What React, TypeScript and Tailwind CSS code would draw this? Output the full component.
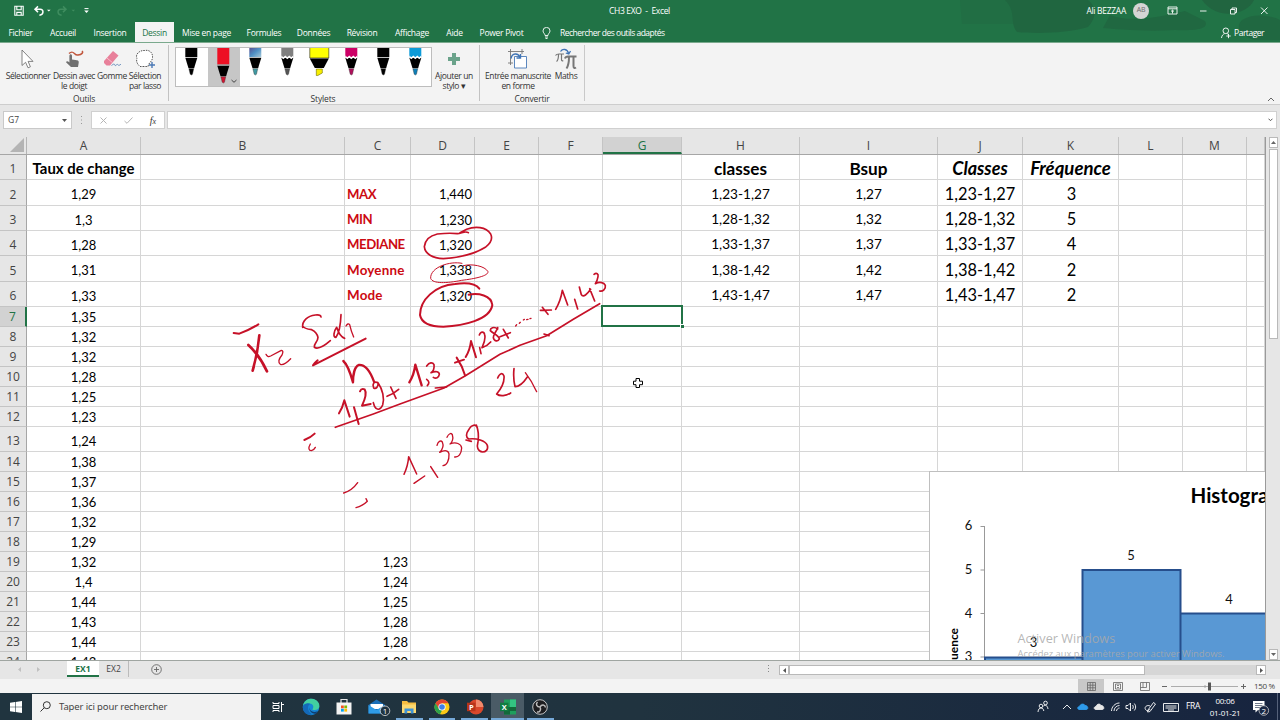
import type { ReactNode } from 'react';
import clsx from 'clsx';

const COLS = ['A', 'B', 'C', 'D', 'E', 'F', 'G', 'H', 'I', 'J', 'K', 'L', 'M', ''];

const GRID =
  'grid grid-cols-[27px_114px_204px_66px_64px_64px_64px_79px_118px_138px_85px_96px_64px_64px_18px]';

type Row = { n: number; h: string; cells: Record<string, string> };

const TALL = 'h-[25px]';
const TALLER = 'h-[26px]';
const STD = 'h-5';

const ROWS: Row[] = [
  { n: 1, h: TALL, cells: { A: 'Taux de change', H: 'classes', I: 'Bsup', J: 'Classes', K: 'Fréquence' } },
  { n: 2, h: TALLER, cells: { A: '1,29', C: 'MAX', D: '1,440', H: '1,23-1,27', I: '1,27', J: '1,23-1,27', K: '3' } },
  { n: 3, h: TALL, cells: { A: '1,3', C: 'MIN', D: '1,230', H: '1,28-1,32', I: '1,32', J: '1,28-1,32', K: '5' } },
  { n: 4, h: TALL, cells: { A: '1,28', C: 'MEDIANE', D: '1,320', H: '1,33-1,37', I: '1,37', J: '1,33-1,37', K: '4' } },
  { n: 5, h: TALLER, cells: { A: '1,31', C: 'Moyenne', D: '1,338', H: '1,38-1,42', I: '1,42', J: '1,38-1,42', K: '2' } },
  { n: 6, h: TALL, cells: { A: '1,33', C: 'Mode', D: '1,320', H: '1,43-1,47', I: '1,47', J: '1,43-1,47', K: '2' } },
  { n: 7, h: STD, cells: { A: '1,35' } },
  { n: 8, h: STD, cells: { A: '1,32' } },
  { n: 9, h: STD, cells: { A: '1,32' } },
  { n: 10, h: STD, cells: { A: '1,28' } },
  { n: 11, h: STD, cells: { A: '1,25' } },
  { n: 12, h: STD, cells: { A: '1,23' } },
  { n: 13, h: TALL, cells: { A: '1,24' } },
  { n: 14, h: STD, cells: { A: '1,38' } },
  { n: 15, h: STD, cells: { A: '1,37' } },
  { n: 16, h: STD, cells: { A: '1,36' } },
  { n: 17, h: STD, cells: { A: '1,32' } },
  { n: 18, h: STD, cells: { A: '1,29' } },
  { n: 19, h: STD, cells: { A: '1,32', C: '1,23' } },
  { n: 20, h: STD, cells: { A: '1,4', C: '1,24' } },
  { n: 21, h: STD, cells: { A: '1,44', C: '1,25' } },
  { n: 22, h: STD, cells: { A: '1,43', C: '1,28' } },
  { n: 23, h: STD, cells: { A: '1,44', C: '1,28' } },
  { n: 24, h: STD, cells: { A: '1,43', C: '1,29' } },
];

function cellStyle(col: string, row: number) {
  if (row === 1) {
    if (col === 'A') return 'justify-center pt-[3px] font-bold text-[14.9px] text-black';
    if (col === 'J') return 'justify-center pt-0.5 font-bold italic text-[18px] text-black';
    if (col === 'K') return 'justify-center pt-0.5 font-bold italic text-[18.6px] text-black';
    return 'justify-center pt-[3px] font-bold text-[17.2px] text-black';
  }
  if (col === 'C' && row < 5) return 'justify-start pl-0.5 font-bold text-[13.2px] tracking-[-0.45px] text-[#cc0a12]';
  if (col === 'C' && row < 7) return 'justify-start pl-0.5 font-bold text-[13.4px] tracking-[0.2px] text-[#cc0a12]';
  if (col === 'C' || col === 'D') return 'justify-end pr-0.5 text-[13px] text-black';
  if (col === 'H' || col === 'I') return 'justify-center text-[13.6px] text-black';
  if (col === 'J') return 'justify-center pt-[3px] text-[16.4px] text-black';
  if (col === 'K') return 'justify-center pl-0.5 pt-[3px] text-[16.4px] text-black';
  return 'justify-center text-[13px] text-black';
}

function cellPad(col: string, row: Row) {
  if (row.n === 1 || col === 'J' || col === 'K') return '';
  return row.h === STD ? 'pt-0.5' : 'pt-1';
}

function TitleBar() {
  return (
    <div className="relative flex h-[21px] items-center text-[8.5px] tracking-[-0.3px] text-white">
      {/* Office background pattern */}
      <svg className="absolute right-0 top-0" width="330" height="43" viewBox="0 0 330 43">
        <path d="M10 0h55v24H12z" fill="#216e44" />
        <path d="M55 0h83c12 10 5 22 0 27-20 6-50 7-71 5-8-10 0-20-12-32z" fill="#206640" />
        <path d="M160 15c20 8 50 2 75-4l20 10c5 8-10 10-30 9-30 2-60-1-72-2z" fill="#206841" />
        <path d="M252 0h52c-6 14-36 22-52 0z" fill="#216540" />
        <path d="M292 20c12-8 30-4 38 0v20h-26c-12-4-20-12-12-20z" fill="#206841" />
      </svg>
      <svg className="relative ml-[14px]" width="76" height="12" viewBox="0 0 76 12" fill="none" stroke="#fff">
        <path d="M.8 1.3h8.400v9H.8zM2.800 1.300v3.400h4.400V1.300M2.800 10.300V7.400h4.400v2.900" strokeWidth="1.100" />
        <path d="M21 4.200h5.200c3.600 0 4 5.400-.8 6M24 1.400 21 4.300l3 2.800" strokeWidth="1.500" />
        <path d="m33 4.800 1.800 1.600 1.800-1.600z" fill="#fff" stroke="none" />
        <path d="M52 4.200h-5.200c-3.600 0-4 5.400.8 6M49 1.400l3 2.900-3 2.800" stroke="#3f8d5f" strokeWidth="1.500" />
        <path d="m57.500 4.800 1.800 1.600 1.800-1.600z" fill="#3f8d5f" stroke="none" />
        <path d="M70.500 3.600h4" />
        <path d="m70.200 5.600 2.300 2.300 2.300-2.300z" fill="#fff" stroke="none" />
      </svg>
      <span className="absolute left-[609px] whitespace-pre pt-px tracking-[-0.34px]">CH3 EXO  -  Excel</span>
      <div className="relative ml-auto flex items-center">
        <span className="pt-px">Ali BEZZAA</span>
        <span className="ml-[7px] flex size-4 items-center justify-center rounded-full bg-[#d5d5d5] text-[7px] text-[#6d6d6d]">
          AB
        </span>
        <svg className="ml-[17px] mr-[8px]" width="106" height="12" viewBox="0 0 106 12" fill="none" stroke="#fff" strokeWidth=".9">
          <path d="M2 2h9v7H2zM2 3.800h9M6.500 8.500V5.300M5 6.500l1.500-1.400L8 6.500" />
          <path d="M34 6h6.500" />
          <path d="M64.500 4.500H69V9h-4.500zM66 4.500V3h4.500v4.500H69" />
          <path d="m95 2.500 6.500 6.500m0-6.500L95 9" />
        </svg>
      </div>
    </div>
  );
}

const TABS = [
  { label: 'Fichier', w: 'w-[41px]' },
  { label: 'Accueil', w: 'w-[44px]' },
  { label: 'Insertion', w: 'w-[50px]' },
  { label: 'Dessin', w: 'w-[39px]', active: true },
  { label: 'Mise en page', w: 'w-[65px]' },
  { label: 'Formules', w: 'w-[50px]' },
  { label: 'Données', w: 'w-[49px]' },
  { label: 'Révision', w: 'w-[48px]' },
  { label: 'Affichage', w: 'w-[52px]' },
  { label: 'Aide', w: 'w-[33px]' },
  { label: 'Power Pivot', w: 'w-[61px]' },
];

function RibbonTabs() {
  return (
    <div className="relative flex h-[21px] text-[8.5px] tracking-[-0.28px] text-white">
      {TABS.map((t) => (
        <div
          key={t.label}
          className={clsx(
            'mt-px flex items-center justify-center whitespace-nowrap pt-0.5',
            t.w,
            t.active && 'bg-[#f3f3f3] text-[#217346]',
          )}
        >
          {t.label}
        </div>
      ))}
      <div className="ml-[10px] flex items-center gap-[9px] pt-[3px]">
        <svg width="9" height="12" viewBox="0 0 9 12" fill="none" stroke="#fff" strokeWidth=".9">
          <path d="M3 8.500C3 6.500 1 6 1 3.900a3.500 3.500 0 0 1 7 0c0 2.100-2 2.600-2 4.600zM3 10h3M3.500 11.500h2" />
        </svg>
        <span className="tracking-[-0.5px]">Rechercher des outils adaptés</span>
      </div>
      <div className="ml-auto mr-4 flex items-center gap-[3px] pt-[3px]">
        <svg width="10" height="12" viewBox="0 0 10 12" fill="none" stroke="#fff" strokeWidth=".9">
          <circle cx="4.800" cy="3.800" r="2.800" />
          <path d="M.5 11c.3-2.500 1.500-3.700 3-4.300M6.500 6.500l1 1.500M7.500 6.800v4.400M5.300 9h4.400" />
        </svg>
        <span className="tracking-[-0.5px]">Partager</span>
      </div>
    </div>
  );
}

function Tool({ icon, lines, className }: { icon: ReactNode; lines: string[]; className: string }) {
  return (
    <div className={clsx('flex flex-col items-center', className)}>
      <div className="flex h-[23.5px] items-center">{icon}</div>
      {lines.map((l) => (
        <span key={l} className="h-[10.5px] whitespace-nowrap leading-[10.5px]">
          {l}
        </span>
      ))}
    </div>
  );
}

type PenProps = { body: string; tip: string; kind?: 'pen' | 'pencil' | 'marker'; selected?: boolean };

function Pen({ body, tip, kind = 'pen', selected }: PenProps) {
  return (
    <div className={clsx('relative h-full w-8', selected && 'bg-[#c6c6c6]')}>
      <svg width="32" height="38" viewBox="0 0 32 38">
        <defs>
          <linearGradient id="galaxy" x1="0" x2="1" y1="0" y2="1">
            <stop offset="0" stopColor="#5b4a8c" />
            <stop offset=".5" stopColor="#4e8fc4" />
            <stop offset="1" stopColor="#a6c9d8" />
          </linearGradient>
        </defs>
        {kind === 'marker' ? (
          <g transform="translate(-.7 -.5)">
            <path d="M6.500 0h19v10.500h-19z" fill={body} stroke="#222" strokeWidth=".6" />
            <path d="M6.500 11h19l-5 9.500h-9z" fill="#000" />
            <path d="M13 21.500h6v4L14.500 28H13z" fill={tip} stroke="#6b6b00" strokeWidth=".6" />
          </g>
        ) : (
          <g transform={selected ? 'translate(-.7 7)' : 'translate(-.7 -1)'}>
            <path d={selected ? 'M10-8h12V9.500H10z' : 'M10 0h12v10H10z'} fill={body} />
            <path d="M10 10.800h12l-3.200 10.400h-5.600z" fill="#000" />
            {kind === 'pencil' && (
              <path d="m10 8.500 2 1.800 2-1.800 2 1.800 2-1.800 2 1.800 2-1.800v2l-2 1.700-2-1.700-2 1.700-2-1.700-2 1.700-2-1.700z" fill="#fff" />
            )}
            {selected && <path d="M10 9.500h12v1.300H10z" fill="#8f8f8f" />}
            <path d="M13.600 21.800h4.800l-1.200 5.400-1 .8-1.300-.8z" fill={tip} stroke="#333" strokeWidth=".4" />
          </g>
        )}
        {selected && <path d="m23.500 32 2.500 2.300 2.500-2.300" fill="none" stroke="#444" />}
      </svg>
    </div>
  );
}

const PENS: PenProps[] = [
  { body: '#000', tip: '#000' },
  { body: '#ed1024', tip: '#d21430', selected: true },
  { body: 'url(#galaxy)', tip: '#3f9aa3' },
  { body: '#7f7f7f', tip: '#555', kind: 'pencil' },
  { body: '#ffff00', tip: '#f7ee00', kind: 'marker' },
  { body: '#cc0066', tip: '#b0105c', kind: 'pencil' },
  { body: '#000', tip: '#000' },
  { body: '#0d9bd8', tip: '#0d7fb8', kind: 'pencil' },
];

function Ribbon() {
  return (
    <div className="relative flex h-[62px] border-b border-[#cdcdcd] bg-[#f3f3f3] text-[8.5px] tracking-[-0.4px] text-[#333]">
      <div className="flex h-full w-[168px] flex-col pt-1">
        <div className="flex h-[45.5px]">
          <Tool
            className="w-[56px]"
            lines={['Sélectionner']}
            icon={
              <svg width="14" height="20" viewBox="0 0 14 20" fill="#fff" stroke="#666" strokeWidth=".8">
                <path d="M1 1v15.500l3.600-3.200 2.400 5.500 2.400-1-2.300-5.400H12z" />
              </svg>
            }
          />
          <Tool
            className="w-[36px]"
            lines={['Dessin avec', 'le doigt']}
            icon={
              <svg width="19" height="18" viewBox="0 0 19 18" fill="none">
                <path d="M4 3.500C9-1 9 6 13 5c4-.5 5.500-2.500 4-4" stroke="#c0563c" strokeWidth="1.500" />
                <path d="M5 4.500c1.500-.5 2 .5 2 1.500v3.500l5 .8c1.500.3 2 1.200 1.700 2.500L13 17H6L1 12.200c.5-1.400 2-1 3.400.3V5.500z" fill="#707070" />
              </svg>
            }
          />
          <Tool
            className="w-[40px]"
            lines={['Gomme']}
            icon={
              <svg width="20" height="18" viewBox="0 0 20 18">
                <path d="m2 11 9-10 5.500 4.500-8.500 10H4.500L2 13z" fill="#e8809a" />
                <path d="m5 8 5.500 4.700" stroke="#f7bfcb" />
                <path d="M9.500 15.500c2-1.500 3-2 3.200-.5 1 2 2-2 3.500 0 .8.800 1.500 0 2.800-.8" fill="none" stroke="#5b83b5" strokeWidth=".9" />
              </svg>
            }
          />
          <Tool
            className="w-[26px]"
            lines={['Sélection', 'par lasso']}
            icon={
              <svg width="20" height="20" viewBox="0 0 20 20" fill="none">
                <path d="M9 17.500H5C0 13 2 10 2 9c-2-3 2-8 8-7.500 4-1 8 2 7.500 7 0 4-4 5-4.500 9z" fill="#fff" stroke="#444" strokeDasharray="1.500 1" strokeWidth=".9" />
                <path d="M17 13v6M14 16h6" stroke="#4a78b5" strokeWidth="1.400" />
              </svg>
            }
          />
        </div>
        <span className="text-center leading-[13px] tracking-[-0.2px]">Outils</span>
      </div>
      <div className="mt-0.5 h-14 w-px bg-[#c2c2c2]" />

      <div className="flex w-[262px] flex-col items-center pl-1.5 pt-1">
        <div className="flex h-10 w-[257px] border border-[#bdbdbd] bg-white">
          {PENS.map((p, i) => (
            <Pen key={i} {...p} />
          ))}
        </div>
        <span className="mt-[5px] w-[257px] pr-1 pl-11 text-center leading-[13px] tracking-[-0.15px]">Stylets</span>
      </div>
      <Tool
        className="w-[46px] pt-1"
        lines={['Ajouter un', 'stylo ▾']}
        icon={
          <svg width="12" height="12" viewBox="0 0 12 12">
            <path d="M4 0h4v4h4v4H8v4H4V8H0V4h4z" fill="#6ba38b" />
          </svg>
        }
      />
      <div className="ml-0.5 mt-0.5 h-14 w-px bg-[#c2c2c2]" />

      <div className="flex w-[104px] flex-col pt-1">
        <div className="flex h-[45.5px]">
          <Tool
            className="w-[76px]"
            lines={['Entrée manuscrite', 'en forme']}
            icon={
              <svg width="20" height="20" viewBox="0 0 20 20" fill="none">
                <path d="M2.500 0v16M0 2.500h16M14 0v5M0 14h5" stroke="#777" strokeWidth=".9" />
                <path d="M6.500 7.500h12v11.500h-12z" fill="#fff" stroke="#4a7ab8" strokeWidth=".9" />
                <path d="M3 9.500C4 4 10 3.500 12 8.500M12.500 5v4H8.500" stroke="#3f74b5" strokeWidth="1.400" />
              </svg>
            }
          />
          <Tool
            className="w-5"
            lines={['Maths']}
            icon={
              <svg width="22" height="22" viewBox="0 0 22 22" fill="none" stroke="#777">
                <path d="M.5 7.500C1.500 6 2 6 4 6h5M3.500 6.500c0 4-.5 6-2 7M6.500 6.500v5c0 1.500.8 1.700 1.700 1" strokeWidth="1.200" />
                <path d="M10 10.500c.5-1.700 1-2 3-2h8.500M14 9c0 6-.8 9-2.500 11.500M18.500 9v9c0 2 1 2.500 2.500 1.500" strokeWidth="2" />
                <path d="M5.500 3.500c2-3 7-3 8 2M15.500 3l-1.700 3-3-1" stroke="#3f74b5" strokeWidth="1.300" />
              </svg>
            }
          />
        </div>
        <span className="text-center leading-[13px] tracking-[-0.2px]">Convertir</span>
      </div>
      <div className="mt-0.5 h-14 w-px bg-[#c9c9c9]" />
      <svg className="ml-auto mr-[5px] mt-[54px]" width="8" height="5" viewBox="0 0 8 5" fill="none" stroke="#666">
        <path d="m1 4 3-3 3 3" />
      </svg>
    </div>
  );
}

function FormulaBar() {
  return (
    <div className="flex h-8 items-start bg-[#e6e6e6] pl-[3px] pt-1.5">
      <div className="flex h-[18px] w-[69px] items-center justify-between border border-[#c9c9c9] bg-white px-1 text-[8.5px] text-[#444]">
        G7
        <svg width="5" height="3" viewBox="0 0 5 3">
          <path d="M0 0h5L2.500 3z" fill="#555" />
        </svg>
      </div>
      <svg className="mx-2 mt-1" width="3" height="10" viewBox="0 0 3 10" fill="#999">
        <path d="M1 1h1v1H1zM1 4.500h1v1H1zM1 8h1v1H1z" />
      </svg>
      <div className="flex h-[18px] w-[74px] items-center justify-between border border-[#d0d0d0] bg-white pl-2 pr-2">
        <svg width="7" height="7" viewBox="0 0 7 7" stroke="#b5b5b5">
          <path d="m.5.5 6 6m0-6-6 6" />
        </svg>
        <svg width="9" height="7" viewBox="0 0 9 7" stroke="#b5b5b5" fill="none">
          <path d="m.5 4 2.500 2.300L8.500.5" />
        </svg>
        <span className="font-['Liberation_Serif'] text-[10px] italic text-[#333]">
          f<span className="text-[8px]">x</span>
        </span>
      </div>
      <div className="ml-0.5 flex h-[18px] w-[1110px] items-center justify-end border border-[#d0d0d0] bg-white pr-[3px]">
        <svg width="5" height="4" viewBox="0 0 5 4" fill="none" stroke="#555">
          <path d="m.5.700 2 2 2-2" />
        </svg>
      </div>
    </div>
  );
}

function Sheet() {
  return (
    <div className="relative h-[523px] w-[1266px] overflow-hidden border-r border-[#9a9a9a] bg-white">
      <div className={clsx(GRID, 'h-[18px] border-b border-[#a6a6a6] bg-[#e6e6e6]')}>
        <div className="flex items-end justify-end border-r border-[#b5b5b5] pb-0.5 pr-0.5">
          <svg width="14" height="14" viewBox="0 0 14 14">
            <path d="M14 0v14H0z" fill="#b4b4b4" />
          </svg>
        </div>
        {COLS.map((c, i) => (
          <div
            key={i}
            className={clsx(
              'flex items-start justify-center border-r border-[#c4c4c4] pt-[3px] text-[12px] leading-none',
              c === 'G' ? 'border-b-2 border-b-[#217346] bg-[#d2d2d2] text-[#217346]' : 'text-[#444]',
            )}
          >
            {c}
          </div>
        ))}
      </div>
      {ROWS.map((r) => (
        <div key={r.n} className={clsx(GRID, r.h)}>
          <div
            className={clsx(
              'flex items-center justify-center border-b border-r text-[12px] leading-none',
              r.h !== STD && 'pt-1',
              r.n === 7
                ? 'border-b-[#c4c4c4] border-r-2 border-r-[#217346] bg-[#d2d2d2] text-[#217346]'
                : 'border-b-[#c4c4c4] border-r-[#a6a6a6] bg-[#e6e6e6] text-[#444]',
            )}
          >
            {r.n}
          </div>
          {COLS.map((c, i) => (
            <div
              key={i}
              className={clsx(
                "flex items-center whitespace-nowrap border-b border-r border-[#d6d6d6] font-['Lato'] leading-none",
                cellStyle(c, r.n),
                cellPad(c, r),
              )}
            >
              {r.cells[c]}
            </div>
          ))}
        </div>
      ))}
      {/* active cell */}
      <div className="absolute left-[601px] top-[168px] h-[22px] w-[82px] border-2 border-[#217346]">
        <div className="absolute -bottom-[3px] -right-[3px] size-1 border-l border-t border-white bg-[#217346]" />
      </div>
      <Chart />
      <Ink />
      <svg className="absolute left-[632px] top-[240px]" width="12" height="12" viewBox="0 0 12 12">
        <path d="M4 1.500h3.500v2.700h3v3.500h-3v2.800H4V7.700H1.500V4.200H4z" fill="#fff" stroke="#000" />
      </svg>
    </div>
  );
}

function Chart() {
  return (
    <div className="absolute left-[929px] top-[334px] h-[200px] w-[345px] border-l border-t border-[#bfbfbf] bg-white font-['Lato']">
      <svg width="344" height="200" viewBox="930 472 344 200" className="text-[13px]">
        <text x="1190.500" y="503" fontSize="20.500" fontWeight="700">Histogramme</text>
        <path d="M984.500 526v140M980.500 526.500h4M980.500 570h4M980.500 613.500h4M980.500 657h4" stroke="#999" fill="none" />
        <g fill="#5998d4" stroke="#264e8c" strokeWidth="2">
          <path d="M985 657.500h98v30h-98z" />
          <path d="M1180 613.500h100v80h-100z" />
          <path d="M1082.500 570h98v110h-98z" />
        </g>
        <g textAnchor="middle" fill="#111">
          <text x="968.500" y="530">6</text>
          <text x="968.500" y="574">5</text>
          <text x="968.500" y="618">4</text>
          <text x="968.500" y="661">3</text>
          <text x="1131" y="560">5</text>
          <text x="1229" y="604">4</text>
          <text x="1033.500" y="647">3</text>
        </g>
        <text transform="translate(958 628) rotate(-90)" textAnchor="end" fontSize="12" fontWeight="700">Fréquence</text>
      </svg>
    </div>
  );
}

// Handwritten mean calculation, drawn at three times the sheet scale
function Ink() {
  return (
    <svg
      className="pointer-events-none absolute left-0 top-0"
      width="1265"
      height="523"
      viewBox="0 137 1265 523"
      fill="none"
      stroke="#c61128"
      strokeLinecap="round"
      strokeLinejoin="round"
    >
      <g transform="translate(220 220) scale(.33333)" strokeWidth="5">
        <path d="M41 339 58 341Q88 330 115 313" strokeWidth="6" />
        <path d="M118 346Q113 400 98 452M85 375Q118 405 141 454" strokeWidth="8" />
        <path d="M138 403Q142 413 152 408L184 391Q192 392 186 405C175 418 174 428 181 433Q192 437 212 416" strokeWidth="4" />
        <path d="M303 291Q302 283 286 285C262 288 246 302 248 322M248 318Q252 326 275 329C285 334 292 342 294 352C294 366 280 372 283 382C296 390 315 376 331 362" />
        <path d="M363 284C362 310 358 338 348 352Q341 352 342 342Q344 330 350 322C355 338 364 352 374 355" />
        <path d="M378 318Q384 308 389 314C392 328 396 340 401 351" strokeWidth="4" />
        <path d="M437 356 279 436Q284 428 293 421" strokeWidth="6" />
        <path d="M370 423C384 435 392 462 399 487C399 465 404 440 416 435C436 433 452 458 462 485" strokeWidth="7" />
        <path d="M357 580Q368 563 373 541L389 590M402 562 416 612" strokeWidth="6" />
        <path d="M420 514Q424 504 434 508C442 520 434 540 426 557L452 552" strokeWidth="6" />
        <path d="M474 488C462 482 456 492 461 504C468 508 476 500 474 488C488 508 494 535 488 555C482 570 470 572 464 560L460 548" />
        <path d="M501 529Q520 522 536 508M512 501 528 535" />
        <path d="M346 622 460 582 540 552 672 504 735 468 840 403 900 376 980 347 1060 298 1139 251" />
        <path d="M646 504 680 501M972 342 987 347" />
        <path d="M253 660Q272 653 284 641" strokeWidth="6" />
        <path d="M271 672C264 684 266 692 274 692Q282 690 286 682M371 819Q396 812 413 788M408 863Q428 858 442 844L438 836" strokeWidth="4" />
      </g>
      <g transform="translate(400 220) scale(.33333)" strokeWidth="5">
        <path d="M205 38C196 32 185 40 172 41C150 38 130 40 112 42C85 48 75 62 73 80C75 102 98 115 130 116C190 112 235 95 256 82C275 68 278 55 272 42C258 20 225 18 200 28L180 38" />
        <path d="M186 130C150 122 90 142 92 175C98 192 140 190 185 181C225 176 265 168 264 155C255 138 215 130 190 137" strokeWidth="3" />
        <path d="M238 206C225 188 195 188 165 192C105 196 60 240 60 285C65 312 95 320 130 320C190 317 270 300 277 255C274 225 235 219 206 224" strokeWidth="6" />
        <path d="M28 487Q42 465 46 434L65 496" strokeWidth="7" />
        <path d="M80 478Q92 486 82 497M80 438C88 426 98 426 102 434C104 446 99 456 93 458C108 452 118 455 118 463C116 474 108 477 100 472" />
        <path d="M165 428 192 419M170 413Q187 438 195 466" strokeWidth="6" />
        <path d="M197 411Q210 390 213 363L228 412" strokeWidth="6" />
        <path d="M239 383 243 401M238 345C242 334 252 334 254 344C258 358 250 374 246 383Q262 378 272 366M293 327C282 318 270 324 271 332C280 342 296 344 298 357C294 366 282 364 280 353C280 342 290 334 293 323M300 350 331 338M310 328 325 354" />
        <path d="M347 318 350 314M358 310 361 307M370 300 373 298M380 299 384 298M390 296 393 295" strokeWidth="4" />
        <path d="M421 271 454 270M427 262 444 283" />
        <path d="M467 268Q482 242 487 211L503 255M524 238 533 267" />
        <path d="M538 201 544 224C550 234 562 222 572 208M569 206 584 243" />
        <path d="M582 163C590 157 596 162 594 170C592 182 590 186 586 191C600 184 612 188 616 196C618 206 608 216 599 213" />
        <path d="M293 474C300 458 308 458 312 468C314 490 302 508 290 522C300 530 318 528 332 519M342 446Q339 475 345 500C360 500 372 486 382 471" />
        <path d="M376 458Q396 484 410 515" strokeWidth="4" />
        <path d="M12 763Q24 738 26 710L50 762M42 790 74 768M92 740 113 772" strokeWidth="4.500" />
        <path d="M111 676C114 664 122 660 127 666C132 678 126 690 119 697C136 688 146 692 147 702C148 722 140 736 129 737M141 652C146 640 154 638 157 644C161 656 156 668 150 672C168 664 184 672 185 684C184 702 176 712 164 711" strokeWidth="4" />
        <path d="M232 623C228 610 214 616 208 626C196 642 198 652 206 657C230 654 256 662 262 676C266 690 256 696 248 696C232 694 230 680 234 665C238 640 234 628 229 615" />
        <path d="M198 660 214 664" />
      </g>
    </svg>
  );
}

function VerticalScrollbar() {
  return (
    <div className="flex w-3.5 flex-col items-center bg-[#e6e6e6]">
      <div className="flex h-[11px] w-[9px] items-center justify-center border border-[#b9b9b9] bg-white">
        <svg width="5" height="3" viewBox="0 0 5 3">
          <path d="M0 3h5L2.500 0z" fill="#666" />
        </svg>
      </div>
      <div className="mt-px h-[190px] w-[9px] border border-[#b9b9b9] bg-white" />
      <div className="mt-auto flex h-[11px] w-[9px] items-center justify-center border border-[#b9b9b9] bg-white">
        <svg width="5" height="3" viewBox="0 0 5 3">
          <path d="M0 0h5L2.500 3z" fill="#666" />
        </svg>
      </div>
    </div>
  );
}

function SheetTabs() {
  return (
    <div className="flex h-[19px] border-t border-[#9fa5a1] bg-[#e6e6e6] text-[8.5px] text-[#444]">
      <svg className="ml-[17px] mt-[5px]" width="24" height="7" viewBox="0 0 24 7" fill="#c0c0c0">
        <path d="M4 1v5L1 3.500zM20 1v5l3-2.500z" />
      </svg>
      <div className="ml-[26px] flex h-4 w-8 items-center justify-center border-b-2 border-[#217346] bg-white pt-0.5 font-bold text-[#217346]">
        EX1
      </div>
      <div className="flex h-4 w-[30px] items-center justify-center border-r border-[#bbb]">EX2</div>
      <svg className="ml-[22px] mt-[3px]" width="11" height="11" viewBox="0 0 11 11" fill="none" stroke="#666" strokeWidth=".9">
        <circle cx="5.500" cy="5.500" r="4.800" />
        <path d="M5.500 3v5M3 5.500h5" />
      </svg>
      <svg className="ml-auto mt-1" width="3" height="9" viewBox="0 0 3 9" fill="#888">
        <path d="M1 0h1v1H1zM1 3h1v1H1zM1 6h1v1H1z" />
      </svg>
      <div className="ml-[9px] mr-[14px] mt-1 flex h-[10px] w-[487px] items-stretch bg-[#d6d6d6]">
        <div className="flex w-[10px] items-center justify-center border border-[#b9b9b9] bg-white">
          <svg width="3" height="5" viewBox="0 0 3 5"><path d="M3 0v5L0 2.500z" fill="#555" /></svg>
        </div>
        <div className="w-[356px] border border-[#b9b9b9] bg-white" />
        <div className="ml-auto flex w-[10px] items-center justify-center border border-[#b9b9b9] bg-white">
          <svg width="3" height="5" viewBox="0 0 3 5"><path d="M0 0v5l3-2.500z" fill="#555" /></svg>
        </div>
      </div>
    </div>
  );
}

function StatusBar() {
  return (
    <div className="flex h-[14px] items-center justify-end bg-[#f3f3f3] pr-[5px] text-[8px] text-[#444]">
      <div className="flex h-full w-[26px] items-center justify-center bg-[#c8c8c8]">
        <svg width="9" height="9" viewBox="0 0 9 9" fill="none" stroke="#666" strokeWidth=".8">
          <path d="M.5.500h8v8h-8zM3.200.500v8M5.800.500v8M.5 3.200h8M.5 5.800h8" />
        </svg>
      </div>
      <svg className="ml-[9px]" width="10" height="9" viewBox="0 0 10 9" fill="none" stroke="#666" strokeWidth=".8">
        <path d="M.5.500h9v8h-9zM2.500 2v5h5V2zM4 3.500h2M4 5.500h2" />
      </svg>
      <svg className="ml-[17px]" width="10" height="9" viewBox="0 0 10 9" fill="none" stroke="#666" strokeWidth=".8">
        <path d="M.5.500h9v8h-9zM3 .5v5h3.500v-5M.5 5.500H3" />
      </svg>
      <svg className="ml-3" width="84" height="9" viewBox="0 0 84 9" fill="none" stroke="#666">
        <path d="M0 4.500h5M79 4.500h5M81.500 2v5" />
        <path d="M9 4.500h67M43 3v3" stroke="#999" strokeWidth=".8" />
        <path d="M46 .5h3v8h-3z" fill="#555" stroke="none" />
      </svg>
      <span className="ml-2 w-[21px] whitespace-nowrap tracking-[-0.35px]">150 %</span>
    </div>
  );
}

function TaskIcon({ children, open, active }: { children: ReactNode; open?: boolean; active?: boolean }) {
  return (
    <div className={clsx('relative flex h-full w-[32.8px] items-center justify-center', active && 'bg-[#4a5b66]')}>
      <svg width="18" height="18" viewBox="0 0 18 18">
        {children}
      </svg>
      {open && <div className={clsx('absolute bottom-0 h-0.5 bg-[#76a9d8]', active ? 'inset-x-0' : 'inset-x-[3px]')} />}
    </div>
  );
}

function Taskbar() {
  return (
    <div className="flex h-[27px] items-center bg-linear-to-r from-[#20343f] via-[#20333f] to-[#17243f] text-white">
      <div className="flex w-8 justify-center">
        <svg width="12" height="12" viewBox="0 0 12 12" fill="#fff">
          <path d="M0 1.700 5 1v4.700H0zM5.600.900 12 0v5.700H5.600zM0 6.300h5V11l-5-.7zM5.600 6.300H12V12l-6.400-.9z" />
        </svg>
      </div>
      <div className="flex h-[26px] w-[229px] items-center bg-[#f2f2f2] pl-2 font-['Noto_Sans'] text-[9.5px] text-[#444]">
        <svg className="mr-2" width="11" height="11" viewBox="0 0 11 11" fill="none" stroke="#333">
          <circle cx="6.800" cy="4.200" r="3.500" />
          <path d="M4.300 6.700.5 10.500" />
        </svg>
        <span className="pt-px tracking-[-0.13px]">Taper ici pour rechercher</span>
      </div>
      <div className="flex h-full pl-[0.7px]">
        <TaskIcon>
          <path d="M4 4v1.500h6V4M4 14v-1.500h6V14M4 7.500h6v3H4zM12.500 4v10M12.500 6.500h2.500" fill="none" stroke="#fff" />
        </TaskIcon>
        <TaskIcon>
          <circle cx="9" cy="9" r="8.300" fill="#1686d6" />
          <path d="M1 8C2 2 7 .5 10 .800c5 .5 8 4.500 7.300 8-.6 3-4.500 4-7 2.600C12.500 9 11 5.500 7.500 5.500 4 5.500 1.500 7 1 8z" fill="#42cfa0" />
          <path d="M1 8C2 5.500 6 4.500 8.500 6 5 7 5 13 10 16.500 4 18 .2 13 1 8z" fill="#1469b8" />
          <path d="M7.500 9.500c0 4 4 5.500 8.500 3.500l-2 2.500c-3 1-7-2-6.500-6z" fill="#103f73" />
        </TaskIcon>
        <TaskIcon>
          <path d="M6 5V1.500h6V5" fill="none" stroke="#e8e8e8" strokeWidth="1.200" />
          <path d="M1.500 4.500h15v12h-15z" fill="#f3f3f3" />
          <path d="M6 7.500h2.800v2.800H6z" fill="#f25022" />
          <path d="M9.300 7.500h2.800v2.800H9.300z" fill="#7fba00" />
          <path d="M6 10.800h2.800v2.800H6z" fill="#00a4ef" />
          <path d="M9.300 10.800h2.800v2.800H9.300z" fill="#ffb900" />
        </TaskIcon>
        <div className="flex h-full w-[32.8px] items-center pl-[7.5px]">
          <svg width="23" height="18" viewBox="0 0 23 18" className="shrink-0">
            <path d="m.5 7 8-5.500L17 7v8.500H.5z" fill="#1b6fb8" />
            <path d="M2.500 6H15v5H2.500z" fill="#fff" />
            <path d="m.5 7 8 5L17 7v8.500H.5z" fill="#2f9be6" />
            <circle cx="17" cy="12.800" r="4.800" fill="#20333f" stroke="#ddd" strokeWidth=".8" />
            <text x="14.800" y="15.800" fontSize="8" fill="#fff">1</text>
          </svg>
        </div>
        <TaskIcon open>
          <path d="M2 3h5l1.500 1.500H16V15H2z" fill="#f5bd42" />
          <path d="M2 6.500h14V15H2z" fill="#fbd870" />
          <path d="M4.500 15.500v-5h9v5h-2.700v-2.500H7.200v2.500z" fill="#3f93d6" />
        </TaskIcon>
        <TaskIcon open>
          <circle cx="9" cy="9" r="7.500" fill="#fbc916" />
          <path d="M2.500 5.200A7.500 7.500 0 0 1 15.500 5.300H9L5.700 11z" fill="#e24333" />
          <path d="M2.500 5.200 6 11l3 1.500-2 3.800A7.500 7.500 0 0 1 2.500 5.200z" fill="#2da24c" />
          <circle cx="9" cy="9" r="3.600" fill="#fff" />
          <circle cx="9" cy="9" r="2.800" fill="#3f7ee8" />
        </TaskIcon>
        <TaskIcon open>
          <circle cx="10" cy="9" r="7.500" fill="#d9482b" />
          <path d="M10 1.500A7.500 7.500 0 0 1 17.500 9H10z" fill="#f08a6c" />
          <path d="M1 4.700h8.500v8.500H1z" fill="#b8341a" />
          <text x="2.900" y="11.700" fontSize="7.500" fontWeight="700" fill="#fff">P</text>
        </TaskIcon>
        <TaskIcon open active>
          <path d="M5 1.500h12v15H5z" fill="#1e9e5c" />
          <path d="M11 1.500h6v7.500h-6z" fill="#33c481" />
          <path d="M5 9h6v7.500H5zM11 9h6v4h-6z" fill="#13693a" />
          <path d="M1 4.700h8.500v8.500H1z" fill="#107c41" />
          <text x="2.700" y="11.700" fontSize="7.500" fontWeight="700" fill="#fff">X</text>
        </TaskIcon>
        <TaskIcon open>
          <circle cx="9" cy="9" r="7.300" fill="#1e1e20" stroke="#d5d5d5" strokeWidth=".9" />
          <path d="M9 9C5.500 9 4.500 6 6.500 4M9 9c1.700-3 5-2.500 5.500.5M9 9c1.700 3-.5 5.500-3 5" fill="none" stroke="#bdbdbd" strokeWidth="1.500" />
        </TaskIcon>
      </div>

      <div className="ml-auto flex h-full items-center">
        <svg width="150" height="16" viewBox="1035 699 150 16" fill="none" stroke="#fff" strokeWidth=".9">
          <circle cx="1041" cy="706" r="1.800" />
          <circle cx="1045.500" cy="703" r="1.800" />
          <path d="M1038 712c.3-3 1.500-4 3-4s2.500 1 2.800 3M1043.500 706c2-1.500 4-.5 4.500 3" />
          <path d="m1063 709 4-4 4 4" />
          <path d="M1079 709.500c-2-.5-1.500-3 .5-3 1-3 4.500-3 5.500-1 2.500-.5 4 3.500 1.500 4z" fill="#2e9bea" stroke="#2e9bea" />
          <path d="M1095.500 709.500c-2-.5-1.500-3 .5-3 1-3 4-3 5-1 2.500-.5 4 3.500 1.500 4z" fill="#e8e8e8" stroke="#e8e8e8" />
          <path d="M1111.500 711c0-4 3.500-8 8-8M1114 711c0-3 2.500-5.500 5.500-5.500M1116.500 711c0-1.500 1.500-3 3-3" />
          <path d="M1126 705.500h2l2.500-2.500v8l-2.500-2.500h-2zM1132.500 705c1 1 1 3 0 4M1134.300 703.500c1.800 2 1.800 5 0 7" />
          <path d="m1148 710 5.500-7.500 2 1.500-5.500 7.500-2.500.5zM1150 706c-3-1.500-6 1-4.500 3.500 1.500 2 4 1 4.500-.5" />
          <path d="M1163.500 703.500h15v8h-15zM1165.500 706h11M1165.500 708h11M1168 710h6" />
        </svg>
        <span className="ml-[1px] w-[17px] text-[8.5px] tracking-[-0.3px]">FRA</span>
        <div className="ml-[5px] w-[34px] text-center text-[8px] leading-[12px] tracking-[-0.25px]">
          <div>00:06</div>
          <div>01-01-21</div>
        </div>
        <svg className="ml-[10px]" width="19" height="18" viewBox="0 0 19 18">
          <path d="M1 3h11.500v9H6L3.500 14.500V12H1z" fill="#fff" />
          <path d="M3 5.500h7.500M3 7.500h7.500M3 9.500h5" stroke="#33425a" strokeWidth=".7" />
          <circle cx="11.800" cy="12.500" r="4.800" fill="#1a2844" stroke="#ccc" strokeWidth=".8" />
          <text x="9.500" y="15.500" fontSize="8" fill="#fff">2</text>
        </svg>
        <div className="ml-[6px] mr-0.5 h-full w-px bg-[#55617a]" />
      </div>
    </div>
  );
}

export default function App() {
  return (
    <div className="relative h-[720px] w-[1280px] overflow-hidden bg-[#e6e6e6] font-['Open_Sans',sans-serif]">
      <div className="border-b border-[#7aa98d] bg-[#217346]">
        <TitleBar />
        <RibbonTabs />
      </div>
      <Ribbon />
      <FormulaBar />
      <div className="flex h-[523px]">
        <Sheet />
        <VerticalScrollbar />
      </div>
      <SheetTabs />
      <StatusBar />
      <Taskbar />
      {/* Windows activation notice */}
      <div className="absolute left-[1017.5px] top-[629px] whitespace-nowrap text-[#a9a9a9]/85">
        <div className="text-[12.7px] leading-[19px]">Activer Windows</div>
        <div className="text-[9.4px] leading-[12px]">Accédez aux paramètres pour activer Windows.</div>
      </div>
    </div>
  );
}
